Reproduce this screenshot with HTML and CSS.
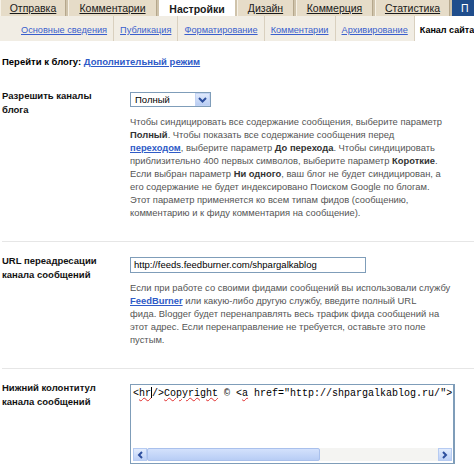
FILE: index.html
```html
<!DOCTYPE html>
<html lang="ru">
<head>
<meta charset="utf-8">
<link rel="stylesheet" href="styles.css">
</head>
<body>
<div class="tabs">
  <a class="tab t1" href="#">Отправка</a>
  <a class="tab t2" href="#">Комментарии</a>
  <span class="tab active t3">Настройки</span>
  <a class="tab t4" href="#">Дизайн</a>
  <a class="tab t5" href="#">Коммерция</a>
  <a class="tab t6" href="#">Статистика</a>
  <span class="tab blue">П</span>
</div>
<div class="subtabs">
  <a class="sub" href="#">Основные сведения</a>
  <a class="sub" href="#">Публикация</a>
  <a class="sub" href="#">Форматирование</a>
  <a class="sub" href="#">Комментарии</a>
  <a class="sub" href="#">Архивирование</a>
  <span class="sub current">Канал сайта</span>
</div>
<div class="content">
  <p class="goto"><b>Перейти к блогу:</b> <a href="#">Дополнительный режим</a></p>

  <div class="row first">
    <div class="label">Разрешить каналы<br>блога</div>
    <div class="field">
      <div class="select">Полный<span class="arrow"><svg width="9" height="6" viewBox="0 0 9 6"><path d="M1 1 L4.5 4.5 L8 1" fill="none" stroke="#2d4f9e" stroke-width="2"/></svg></span></div>
      <p class="desc">Чтобы синдицировать все содержание сообщения, выберите параметр<br><b>Полный</b>. Чтобы показать все содержание сообщения перед<br><a href="#">переходом</a>, выберите параметр <b>До перехода</b>. Чтобы синдицировать<br>приблизительно 400 первых символов, выберите параметр <b>Короткие</b>.<br>Если выбран параметр <b>Ни одного</b>, ваш блог не будет синдицирован, а<br>его содержание не будет индексировано Поиском Google по блогам.<br>Этот параметр применяется ко всем типам фидов (сообщению,<br>комментарию и к фиду комментария на сообщение).</p>
    </div>
  </div>

  <div class="row">
    <div class="label">URL переадресации<br>канала сообщений</div>
    <div class="field">
      <div class="input">http://feeds.feedburner.com/shpargalkablog</div>
      <p class="desc">Если при работе со своими фидами сообщений вы использовали службу<br><a href="#">FeedBurner</a> или какую-либо другую службу, введите полный URL<br>фида. Blogger будет перенаправлять весь трафик фида сообщений на<br>этот адрес. Если перенаправление не требуется, оставьте это поле<br>пустым.</p>
    </div>
  </div>

  <div class="row">
    <div class="label">Нижний колонтитул<br>канала сообщений</div>
    <div class="field">
      <div class="textarea">
        <div class="code">&lt;<span class="sp">hr</span><span class="caret"></span>/&gt;<span class="sp">Copyright</span> © &lt;<span class="sp">a</span> href="http://shpargalkablog.ru/"&gt;</div>
        <div class="hscroll">
          <span class="sbtn"><svg width="6" height="8" viewBox="0 0 6 8"><path d="M5 1 L2 4 L5 7" fill="none" stroke="#2d4f9e" stroke-width="2"/></svg></span>
          <span class="thumb"></span>
          <span class="track"></span>
          <span class="sbtn"><svg width="6" height="8" viewBox="0 0 6 8"><path d="M1 1 L4 4 L1 7" fill="none" stroke="#2d4f9e" stroke-width="2"/></svg></span>
        </div>
      </div>
    </div>
  </div>
</div>
</body>
</html>
```
FILE: styles.css
```css
html, body {
  margin: 0;
  padding: 0;
  background: #ffffff;
}
body {
  font-family: "Liberation Sans", Arial, sans-serif;
  font-size: 9.5px;
  color: #000;
  width: 474px;
  overflow: hidden;
}
.tabs {
  display: flex;
  height: 16px;
  background: #cfc3ab;
  gap: 2px;
  overflow: hidden;
}
.tab {
  display: flex;
  align-items: center;
  justify-content: center;
  box-sizing: border-box;
  height: 16px;
  background: #e6dcc8;
  border-left: 1px solid #f6f1e6;
  border-right: 1px solid #b5a78c;
  color: #1a1a1a;
  font-size: 10.5px;
  text-decoration: underline;
  flex: none;
}
.t1 { width: 66px; }
.t2 { width: 89px; }
.t3 { width: 76px; }
.t4 { width: 57px; }
.t5 { width: 77px; }
.t6 { width: 75px; }
.tab.active {
  background: #ffffff;
  border: none;
  font-weight: bold;
  text-decoration: none;
  height: 17px;
}
.tab.blue {
  background: #1f4d8c;
  color: #fff;
  border: none;
  width: 22px;
  justify-content: flex-start;
  padding-left: 9px;
  text-decoration: none;
}
.subtabs {
  display: flex;
  height: 25px;
  background: #f1ede4;
  align-items: stretch;
  padding-left: 15px;
}
.sub {
  display: flex;
  align-items: center;
  padding: 3px 6px 0;
  font-size: 9.2px;
  color: #3a5fcd;
  text-decoration: underline;
  border-right: 1px solid #d9d0bf;
  white-space: nowrap;
}
.sub.current {
  background: #ffffff;
  color: #000;
  font-weight: bold;
  font-size: 9px;
  text-decoration: none;
  border-right: none;
  padding-left: 5px;
  padding-right: 0;
  flex: 1;
}
.content {
  padding: 0 0 0 2px;
}
.goto {
  margin: 14px 0 0;
  line-height: 13px;
}
.goto a {
  color: #2f5bc7;
  font-weight: bold;
  text-decoration: underline;
}
.row {
  display: grid;
  grid-template-columns: 128px 1fr;
  padding: 15px 0 22px;
  border-top: 1px solid #e6e6e6;
}
.row.first {
  border-top: none;
  padding-top: 24px;
}
.label {
  font-weight: bold;
  line-height: 14px;
  color: #111;
  margin-top: -3px;
}
.field {
  display: flex;
  flex-direction: column;
  align-items: flex-start;
}
.select {
  box-sizing: border-box;
  width: 81px;
  height: 15px;
  border: 1px solid #7f9db9;
  display: flex;
  align-items: center;
  justify-content: space-between;
  padding-left: 4px;
  color: #000;
}
.arrow {
  width: 15px;
  height: 13px;
  background: linear-gradient(#dfe9fc, #b9cdf3);
  border: 1px solid #c3d3f3;
  box-sizing: border-box;
  display: flex;
  align-items: center;
  justify-content: center;
}
.desc {
  margin: 8px 0 0;
  color: #555;
  font-size: 9.4px;
  line-height: 13px;
  white-space: nowrap;
}
.desc b {
  color: #333;
}
.desc a {
  color: #2f5bc7;
  font-weight: bold;
  text-decoration: underline;
}
.input {
  box-sizing: border-box;
  width: 236px;
  height: 16px;
  border: 1px solid #7f9db9;
  padding: 1px 3px;
  line-height: 12px;
  color: #000;
}
.textarea {
  box-sizing: border-box;
  width: 325px;
  height: 80px;
  border: 1px solid #7f9db9;
  border-right-width: 2px;
  display: flex;
  flex-direction: column;
  justify-content: space-between;
  padding: 2px 0 2px 2px;
}
.code {
  font-family: "Liberation Mono", "Courier New", monospace;
  font-size: 10px;
  line-height: 14px;
  white-space: nowrap;
  color: #000;
}
.sp {
  text-decoration: underline wavy #e03030;
  text-decoration-thickness: 1px;
}
.caret {
  display: inline-block;
  width: 1px;
  height: 11px;
  background: #000;
  vertical-align: -2px;
}
.hscroll {
  display: flex;
  flex: none;
  height: 13px;
  margin-right: 1px;
  background: #f4f4f2;
}
.sbtn {
  width: 14px;
  flex: none;
  background: linear-gradient(#e3ecfd, #bcd0f6);
  border: 1px solid #b6cbf2;
  box-sizing: border-box;
  display: flex;
  align-items: center;
  justify-content: center;
}
.thumb {
  width: 173px;
  flex: none;
  background: linear-gradient(#d3e1fc, #b8cdf5);
  border: 1px solid #a9c0ec;
  border-radius: 2px;
  box-sizing: border-box;
}
.track {
  flex: 1;
}
```
